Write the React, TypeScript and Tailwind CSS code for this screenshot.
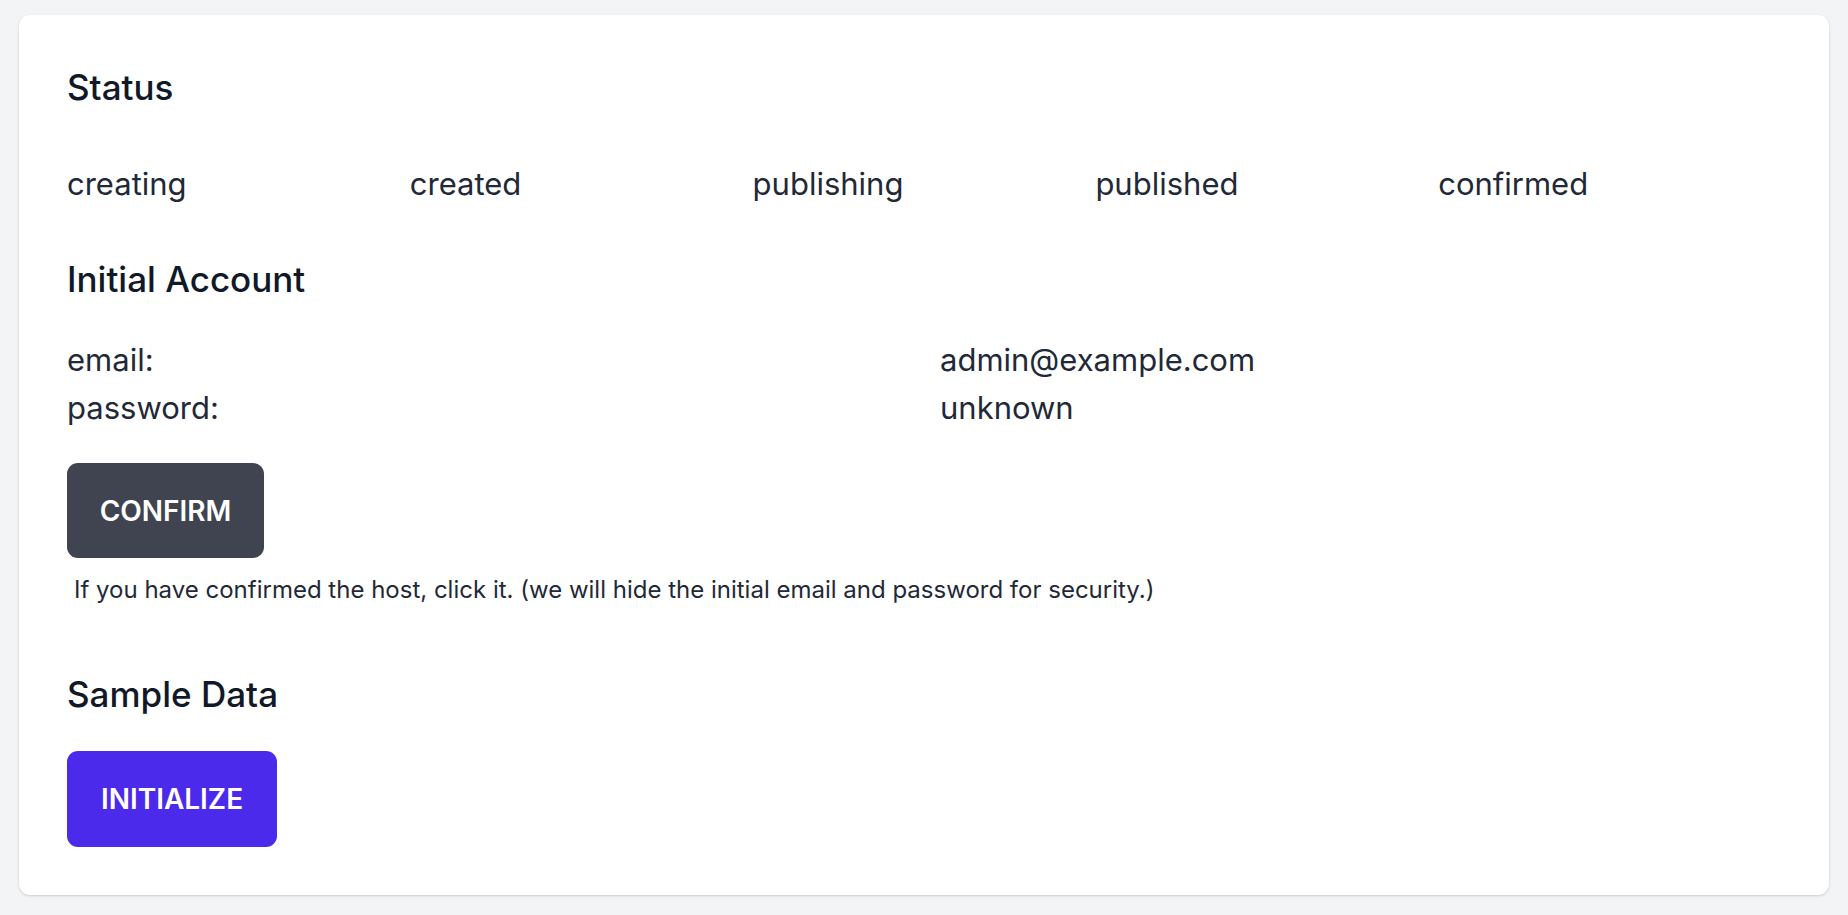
export default function App() {
  const statuses = ["creating", "created", "publishing", "published", "confirmed"]

  return (
    <main className="min-h-screen bg-[#f3f4f6] px-[19px] pt-[15px] pb-[20px] font-['Inter',sans-serif] text-[#1f2937]">
      <section className="rounded-[11px] bg-white px-[48px] pt-[48px] pb-[48px] shadow-[0_1px_3px_rgba(0,0,0,0.12),0_1px_2px_rgba(0,0,0,0.06)]">
        <h2 className="text-[35px] leading-[48px] font-medium text-[#111827]">
          Status
        </h2>

        <div className="mt-[49px] grid grid-cols-5 text-[31px] leading-[48px]">
          {statuses.map((status) => (
            <div key={status}>{status}</div>
          ))}
        </div>

        <h2 className="mt-[47px] text-[35px] leading-[48px] font-medium text-[#111827]">
          Initial Account
        </h2>

        <div className="mt-[33px] grid grid-cols-2 gap-x-[32px] text-[31px] leading-[48px]">
          <div>email:</div>
          <div>admin@example.com</div>
          <div>password:</div>
          <div>unknown</div>
        </div>

        <button
          type="button"
          className="mt-[31px] block h-[95px] w-[197px] rounded-[11px] bg-[#3f4450] text-[28px] font-semibold uppercase text-white"
        >
          Confirm
        </button>

        <p className="mt-[16px] pl-[7px] text-[24px] leading-[32px]">
          If you have confirmed the host, click it. (we will hide the initial
          email and password for security.)
        </p>

        <h2 className="mt-[64px] text-[35px] leading-[48px] font-medium text-[#111827]">
          Sample Data
        </h2>

        <button
          type="button"
          className="mt-[33px] block h-[96px] w-[210px] rounded-[11px] bg-[#4c2aec] text-[28px] font-semibold uppercase text-white"
        >
          Initialize
        </button>
      </section>
    </main>
  )
}
